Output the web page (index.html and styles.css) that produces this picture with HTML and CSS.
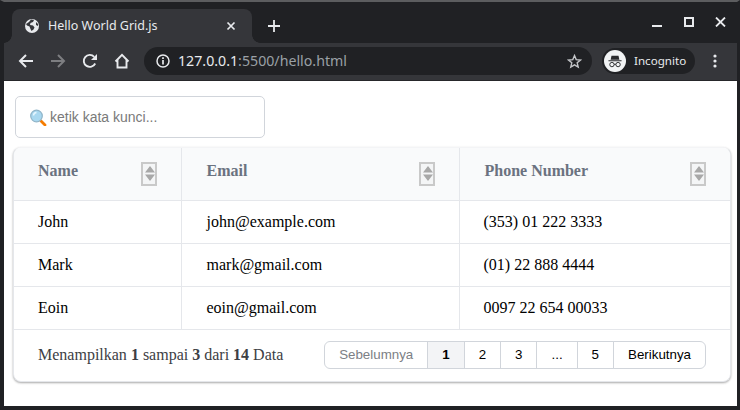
FILE: index.html
```
<!DOCTYPE html>
<html lang="id">
<head>
<meta charset="utf-8">
<title>Hello World Grid.js</title>
<link rel="stylesheet" href="styles.css">
</head>
<body>
<div class="window">
  <header class="tabstrip">
    <div class="tab">
      <svg class="globe" width="14" height="14" viewBox="0 0 14 14"><circle cx="7" cy="7" r="7" fill="#e8eaed"/><path d="M1 5l3-2 2-2.500 3 .5-1 2-2.500 1-.5 2 3 .5 1.500 2-1 2-2 1.500-1-2-1-2.500-2.500-1zM11 3l2 2v2l-2-1z" fill="#35363a"/></svg>
      <span class="tab-title">Hello World Grid.js</span>
      <svg class="tab-close" width="10" height="10" viewBox="0 0 10 10"><path d="M1.500 1.500l7 7M8.500 1.500l-7 7" stroke="#e8eaed" stroke-width="1.700" fill="none"/></svg>
    </div>
    <svg class="newtab" width="12" height="12" viewBox="0 0 12 12"><path d="M6 0v12M0 6h12" stroke="#e8eaed" stroke-width="1.800" fill="none"/></svg>
    <div class="winctl">
      <svg width="11" height="10" viewBox="0 0 11 10"><path d="M0 9h10" stroke="#e8eaed" stroke-width="2" fill="none"/></svg>
      <svg width="10" height="10" viewBox="0 0 10 10"><rect x="1" y="1" width="8" height="8" stroke="#e8eaed" stroke-width="2" fill="none"/></svg>
      <svg width="11" height="10" viewBox="0 0 11 10"><path d="M1 .5l9 9M10 .5l-9 9" stroke="#e8eaed" stroke-width="1.800" fill="none"/></svg>
    </div>
  </header>
  <nav class="toolbar">
    <div class="navbtns">
      <svg width="16" height="16" viewBox="0 0 16 16"><path d="M15 8H2M8 2L2 8l6 6" stroke="#e8eaed" stroke-width="2" fill="none"/></svg>
      <svg width="16" height="16" viewBox="0 0 16 16"><path d="M1 8h13M8 2l6 6-6 6" stroke="#7d7e81" stroke-width="2" fill="none"/></svg>
      <svg width="16" height="16" viewBox="0 0 16 16"><path d="M13.200 10.500A6 6 0 1 1 12.200 3.800" stroke="#e8eaed" stroke-width="1.900" fill="none"/><path d="M15 1v6H9z" fill="#e8eaed"/></svg>
      <svg width="16" height="16" viewBox="0 0 16 16"><path d="M1.500 8.500L8 1.800l6.500 6.700M3.500 7v7.500h9V7" stroke="#e8eaed" stroke-width="1.900" fill="none"/></svg>
    </div>
    <div class="omnibox">
      <svg class="info" width="14" height="14" viewBox="0 0 14 14"><circle cx="7" cy="7" r="6" stroke="#e8eaed" stroke-width="1.500" fill="none"/><path d="M7 6v4.500M7 3.300v1.600" stroke="#e8eaed" stroke-width="1.700" fill="none"/></svg>
      <span class="url"><span class="host">127.0.0.1</span>:5500/hello.html</span>
      <svg class="star" width="15" height="15" viewBox="0 0 15 15"><path d="M7.500 1.600l1.700 4 4.300.4-3.300 2.800 1 4.200-3.700-2.200-3.700 2.200 1-4.200L1.500 6l4.300-.4z" stroke="#c4c6c9" stroke-width="1.400" fill="none"/></svg>
    </div>
    <div class="profile">
      <span class="avatar">
        <svg width="16" height="14" viewBox="0 0 16 14"><path d="M4 0.500h8l1 4.500H3zM0.500 5.500h15v1.200h-15z" fill="#2a2b2e"/><circle cx="4.500" cy="10.500" r="2.500" stroke="#2a2b2e" stroke-width="1.100" fill="none"/><circle cx="11.500" cy="10.500" r="2.500" stroke="#2a2b2e" stroke-width="1.100" fill="none"/><path d="M7 10.200h2" stroke="#2a2b2e" stroke-width="1.100"/></svg>
      </span>
      <span class="profile-name">Incognito</span>
    </div>
    <svg class="kebab" width="4" height="14" viewBox="0 0 4 14"><circle cx="2" cy="2" r="1.600" fill="#e8eaed"/><circle cx="2" cy="7" r="1.600" fill="#e8eaed"/><circle cx="2" cy="12" r="1.600" fill="#e8eaed"/></svg>
  </nav>
  <main class="page">
    <div class="search">
      <svg width="18" height="18" viewBox="0 0 18 18"><path d="M12 13l4 4" stroke="#f57c00" stroke-width="2.800" stroke-linecap="round"/><circle cx="7.500" cy="8" r="5.800" fill="#a9d8f0" stroke="#8fb4c8" stroke-width="1.200"/><path d="M4.500 7.500A3.200 3.200 0 0 1 7.500 4.500" stroke="#e6f6ff" stroke-width="1.500" fill="none"/></svg>
      <span class="placeholder">ketik kata kunci...</span>
    </div>
    <section class="card">
      <table class="grid">
        <colgroup><col class="col-name"><col class="col-email"><col class="col-phone"></colgroup>
        <thead>
          <tr>
            <th><div class="th-inner"><span>Name</span><button class="sort" type="button" aria-label="Urutkan"><svg width="12" height="20" viewBox="0 0 12 20"><path d="M7 2l5 6.500H2zM2 10.500h10L7 17z" fill="#a8a8a8"/></svg></button></div></th>
            <th><div class="th-inner"><span>Email</span><button class="sort" type="button" aria-label="Urutkan"><svg width="12" height="20" viewBox="0 0 12 20"><path d="M7 2l5 6.500H2zM2 10.500h10L7 17z" fill="#a8a8a8"/></svg></button></div></th>
            <th><div class="th-inner"><span>Phone Number</span><button class="sort" type="button" aria-label="Urutkan"><svg width="12" height="20" viewBox="0 0 12 20"><path d="M7 2l5 6.500H2zM2 10.500h10L7 17z" fill="#a8a8a8"/></svg></button></div></th>
          </tr>
        </thead>
        <tbody>
          <tr><td>John</td><td>john@example.com</td><td>(353) 01 222 3333</td></tr>
          <tr><td>Mark</td><td>mark@gmail.com</td><td>(01) 22 888 4444</td></tr>
          <tr><td>Eoin</td><td>eoin@gmail.com</td><td>0097 22 654 00033</td></tr>
        </tbody>
      </table>
      <footer class="foot">
        <div class="summary">Menampilkan <b>1</b> sampai <b>3</b> dari <b>14</b> Data</div>
        <div class="pager">
          <button class="pg pg-off" type="button">Sebelumnya</button>
          <button class="pg pg-cur" type="button">1</button>
          <button class="pg" type="button">2</button>
          <button class="pg" type="button">3</button>
          <button class="pg pg-gap" type="button">...</button>
          <button class="pg" type="button">5</button>
          <button class="pg" type="button">Berikutnya</button>
        </div>
      </footer>
    </section>
  </main>
</div>
</body>
</html>
```
FILE: styles.css
```
* { box-sizing: border-box; }
html, body { margin: 0; padding: 0; background: #fff; overflow: hidden; }
.window {
  width: 740px;
  height: 410px;
  display: flex;
  flex-direction: column;
  background: #202124;
  border-top: 2px solid #5c5d5f;
  border-left: 4px solid #202124;
  border-right: 3px solid #202124;
  border-bottom: 4px solid #202124;
}
.tabstrip {
  height: 41px;
  flex: none;
  display: flex;
  align-items: flex-end;
  padding-left: 8px;
  background: #202124;
}
.tab {
  position: relative;
  width: 240px;
  height: 34px;
  display: flex;
  align-items: center;
  padding: 0 13px;
  background: #35363a;
  border-radius: 8px 8px 0 0;
  color: #e8eaed;
  font: 12.5px/1 "Noto Sans", sans-serif;
}
.tab::before, .tab::after {
  content: "";
  position: absolute;
  bottom: 0;
  width: 8px;
  height: 8px;
}
.tab::before {
  left: -8px;
  background: radial-gradient(circle at 0 0, #202124 7.5px, #35363a 8px);
}
.tab::after {
  right: -8px;
  background: radial-gradient(circle at 100% 0, #202124 7.5px, #35363a 8px);
}
.globe { flex: none; margin-right: 9px; }
.tab-title { flex: 1; }
.tab-close { flex: none; margin-right: 3px; }
.newtab { flex: none; margin: 0 0 11px 16px; }
.winctl {
  margin-left: auto;
  align-self: flex-start;
  display: flex;
  gap: 21px;
  padding: 15px 11px 0 0;
}
.toolbar {
  height: 38px;
  flex: none;
  display: flex;
  align-items: center;
  background: #35363a;
  border-bottom: 1px solid #26272a;
  padding: 0 0 1px 14px;
}
.navbtns { display: flex; gap: 16px; width: 126px; flex: none; align-items: center; }
.omnibox {
  width: 448px;
  height: 28px;
  flex: none;
  display: flex;
  align-items: center;
  background: #202124;
  border-radius: 14px;
  padding: 0 10px 0 12px;
}
.info { flex: none; margin-right: 8px; }
.url { flex: 1; color: #9aa0a6; font: 14.2px/1 "Noto Sans", sans-serif; }
.host { color: #e8eaed; }
.profile {
  width: 93px;
  height: 26px;
  flex: none;
  margin-left: 10px;
  display: flex;
  align-items: center;
  background: #202124;
  border-radius: 13px;
  padding-left: 2px;
}
.avatar {
  width: 22px;
  height: 22px;
  border-radius: 50%;
  background: #f1f3f4;
  display: flex;
  align-items: center;
  justify-content: center;
  margin-right: 8px;
}
.avatar svg { width: 14px; height: 13px; }
.profile-name { color: #e8eaed; font: 11.6px/1 "Noto Sans", sans-serif; }
.kebab { flex: none; margin-left: 18px; }
.page {
  flex: 1;
  background: #fff;
  padding: 15px 6px 0 9px;
  min-height: 0;
}
.search {
  width: 250px;
  height: 42px;
  margin-left: 2px;
  display: flex;
  align-items: center;
  gap: 3px;
  padding: 0 13px;
  border: 1px solid #d1d5db;
  border-radius: 5px;
  background: #fff;
}
.placeholder { color: #7a7a7a; font: 14px/1 "Liberation Sans", Arial, sans-serif; }
.card {
  width: 718px;
  margin-top: 9px;
  border: 1px solid #e5e7eb;
  border-top-color: #f3f4f6;
  border-radius: 8px;
  box-shadow: 0 1px 3px rgba(0, 0, 0, .1), 0 1px 2px rgba(0, 0, 0, .26);
  overflow: hidden;
  background: #fff;
}
.grid {
  width: 716px;
  table-layout: fixed;
  border-collapse: collapse;
  font: 16px/1.15 "Liberation Serif", "Times New Roman", serif;
}
.col-name { width: 167px; }
.col-email { width: 278px; }
.grid th {
  height: 52px;
  padding: 0 24px;
  text-align: left;
  vertical-align: top;
  background: #f9fafb;
  color: #6b7280;
  border-right: 1px solid #e5e7eb;
  border-bottom: 1px solid #e5e7eb;
}
.grid th:last-child, .grid td:last-child { border-right: 0; }
.grid th + th { padding-left: 25px; }
.th-inner { display: flex; justify-content: space-between; padding-top: 14px; }
.sort {
  width: 16px;
  height: 24px;
  flex: none;
  padding: 0;
  margin: 0;
  border: 2px solid #c9c9c9;
  background: #f4f5f6;
  display: flex;
  align-items: center;
  justify-content: center;
}
.sort svg { width: 12px; height: 20px; }
.grid td {
  height: 43px;
  padding: 1px 24px 0;
  color: #000;
  border-right: 1px solid #e5e7eb;
  border-bottom: 1px solid #e5e7eb;
}
.grid td:nth-child(2) { padding-left: 25px; }
.foot {
  height: 51px;
  display: flex;
  align-items: center;
  justify-content: space-between;
  padding: 0 24px;
}
.summary { color: #3d4044; font: 16px/1 "Liberation Serif", "Times New Roman", serif; }
.pager { display: flex; }
.pg {
  height: 28px;
  padding: 0 14px;
  margin: 0 0 0 -1px;
  border: 1px solid #d1d5db;
  background: #fff;
  color: #000;
  font: 13.333px/1 "Liberation Sans", Arial, sans-serif;
}
.pg:first-child { border-radius: 6px 0 0 6px; margin-left: 0; }
.pg:last-child { border-radius: 0 6px 6px 0; }
.pg-off { color: #7c8085; }
.pg-cur { background: #f3f4f6; font-weight: bold; }
```
